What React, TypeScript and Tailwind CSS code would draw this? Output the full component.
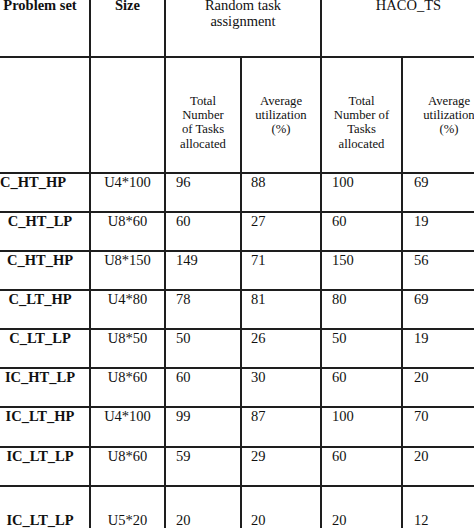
import React from "react";

const rows: [string, string, string, string, string, string][] = [
  ["C_HT_HP", "U4*100", "96", "88", "100", "69"],
  ["C_HT_LP", "U8*60", "60", "27", "60", "19"],
  ["C_HT_HP", "U8*150", "149", "71", "150", "56"],
  ["C_LT_HP", "U4*80", "78", "81", "80", "69"],
  ["C_LT_LP", "U8*50", "50", "26", "50", "19"],
  ["IC_HT_LP", "U8*60", "60", "30", "60", "20"],
  ["IC_LT_HP", "U4*100", "99", "87", "100", "70"],
  ["IC_LT_LP", "U8*60", "59", "29", "60", "20"],
  ["IC_LT_LP", "U5*20", "20", "20", "20", "12"],
];

function Sub({ lines }: { lines: string[] }) {
  return (
    <div className="bg-white pt-[36px] text-center text-[12.7px] leading-[14.2px]">
      {lines.map((l, i) => (
        <div key={i}>{l}</div>
      ))}
    </div>
  );
}

export default function App() {
  return (
    <div
      className="w-[474px] h-[528px] overflow-hidden bg-white text-[#111]"
      style={{ fontFamily: '"Liberation Serif", "Times New Roman", serif' }}
    >
      <div className="grid w-[495px] grid-cols-[89px_73px_74px_78px_79px_92px] grid-rows-[56px_114px_37px_37px_37px_37px_37px_37px_38px_37px_60px] gap-[2px] bg-[#1e1e1e] text-[14.5px] leading-[16px]">
        {/* header row */}
        <div className="bg-white pr-[9px] text-center font-bold">
          <div className="-mt-[3px]">Problem set</div>
        </div>
        <div className="bg-white text-center font-bold">
          <div className="-mt-[3px]">Size</div>
        </div>
        <div className="col-span-2 bg-white text-center">
          <div className="-mt-[3px]">
            Random task
            <br />
            assignment
          </div>
        </div>
        <div className="col-span-2 bg-white text-center">
          <div className="-mt-[3px]">HACO_TS</div>
        </div>

        {/* sub header row */}
        <div className="bg-white" />
        <div className="bg-white" />
        <Sub lines={["Total", "Number", "of Tasks", "allocated"]} />
        <Sub lines={["Average", "utilization", "(%)"]} />
        <Sub lines={["Total", "Number of", "Tasks", "allocated"]} />
        <Sub lines={["Average", "utilization", "(%)"]} />

        {rows.map((r, i) => {
          const last = i === rows.length - 1;
          const pt = last ? "pt-[25px]" : "pt-0";
          return (
            <React.Fragment key={i}>
              <div
                className={`bg-white text-center font-bold ${pt} ${
                  i === 0 ? "pr-[23px]" : "pr-[9px]"
                }`}
              >
                {r[0]}
              </div>
              <div className={`bg-white text-center ${pt}`}>{r[1]}</div>
              <div className={`bg-white pl-[10px] ${pt}`}>{r[2]}</div>
              <div className={`bg-white pl-[9px] ${pt}`}>{r[3]}</div>
              <div className={`bg-white pl-[10px] ${pt}`}>{r[4]}</div>
              <div className={`bg-white pl-[11px] ${pt}`}>{r[5]}</div>
            </React.Fragment>
          );
        })}
      </div>
    </div>
  );
}
